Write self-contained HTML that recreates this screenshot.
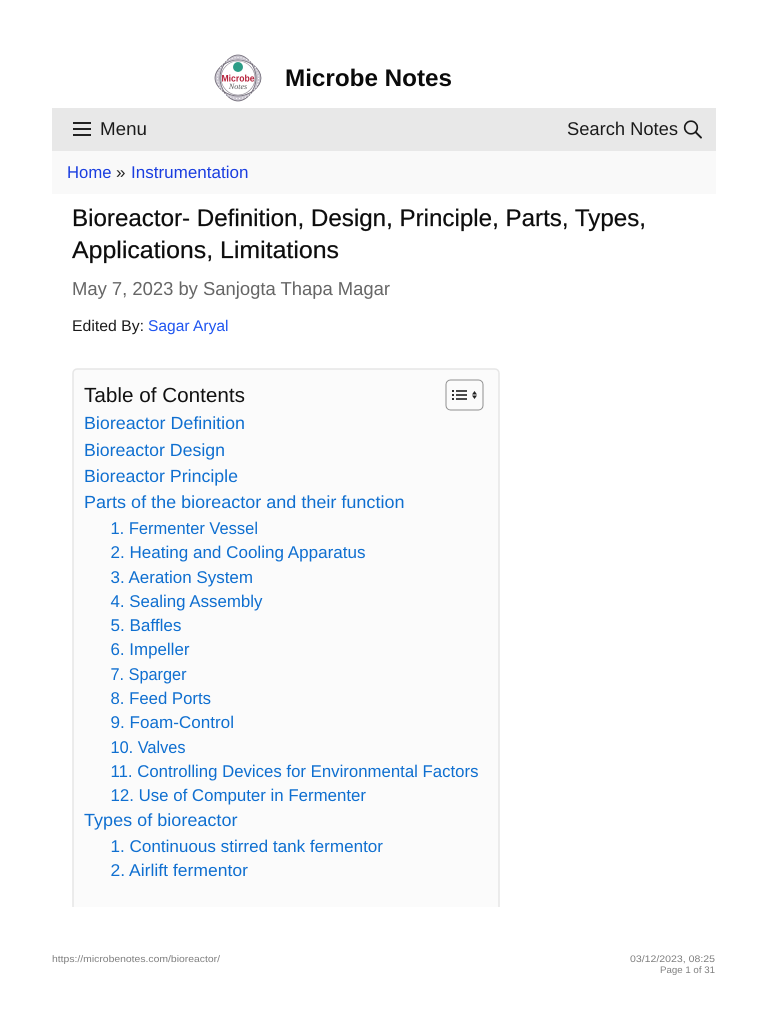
<!DOCTYPE html>
<html lang="en">
<head>
<meta charset="utf-8">
<title>Bioreactor - Microbe Notes</title>
<style>
html,body{margin:0;padding:0;background:#fff}
body{width:768px;height:1024px;overflow:hidden;position:relative}
svg{position:absolute;left:0;top:0;display:block}
text{font-family:"Liberation Sans",sans-serif;text-rendering:geometricPrecision}
.l{fill:#0f6fd0;font-size:17.6px}
.s{fill:#0f6fd0;font-size:17px}
.t{stroke:#0d0d0d;stroke-width:.22px}
</style>
</head>
<body>
<svg width="768" height="1024" viewBox="0 0 768 1024" xmlns="http://www.w3.org/2000/svg">
<!-- logo -->
<g transform="translate(238 78)">
<g fill="#c9c5cf" stroke="#6f6a76" stroke-width="0.8">
<path id="lens" d="M-15-13Q0-33 15-13Q0-23-15-13z"/>
<path d="M-15-13Q0-33 15-13Q0-23-15-13z" transform="rotate(90)"/>
<path d="M-15-13Q0-33 15-13Q0-23-15-13z" transform="rotate(180)"/>
<path d="M-15-13Q0-33 15-13Q0-23-15-13z" transform="rotate(270)"/>
</g>
<circle r="20.500" fill="none" stroke="#fff" stroke-width="1" stroke-dasharray="1 2"/>
<circle r="17" fill="#fff" stroke="#8b8692" stroke-width="0.6"/>
<circle cx="0" cy="-11" r="5" fill="#2c9c86"/>
<text x="0" y="3.500" text-anchor="middle" font-size="9.500" font-weight="700" fill="#b5203a" textLength="33" lengthAdjust="spacingAndGlyphs">Microbe</text>
<text x="0" y="11" text-anchor="middle" font-size="8" font-style="italic" fill="#555" style="font-family:'Liberation Serif',serif">Notes</text>
</g>
<text x="285" y="86" font-size="24" font-weight="700" fill="#0a0a0a" textLength="167" lengthAdjust="spacingAndGlyphs">Microbe Notes</text>

<!-- nav -->
<rect x="52" y="108" width="664" height="43" fill="#e8e8e8"/>
<path d="M73 123h18M73 129h18M73 135h18" stroke="#222" stroke-width="2" fill="none"/>
<text x="100" y="135" font-size="18.500" fill="#1a1a1a" textLength="47" lengthAdjust="spacingAndGlyphs">Menu</text>
<text x="567" y="135" font-size="18.500" fill="#1a1a1a" textLength="111" lengthAdjust="spacingAndGlyphs">Search Notes</text>
<circle cx="691" cy="127.500" r="6.300" fill="none" stroke="#1a1a1a" stroke-width="1.700"/>
<path d="M695.600 132.200L701 137.600" stroke="#1a1a1a" stroke-width="1.900" fill="none" stroke-linecap="round"/>

<!-- breadcrumb -->
<rect x="52" y="151" width="664" height="43" fill="#f9f9f9"/>
<text x="67" y="178" font-size="17" fill="#1a3ee0" textLength="44.500" lengthAdjust="spacingAndGlyphs">Home</text>
<text x="116" y="178" font-size="17" fill="#222">»</text>
<text x="131" y="178" font-size="17" fill="#1a3ee0" textLength="117.500" lengthAdjust="spacingAndGlyphs">Instrumentation</text>

<!-- title -->
<text class="t" x="72" y="226" font-size="24" fill="#0d0d0d" textLength="574" lengthAdjust="spacingAndGlyphs">Bioreactor- Definition, Design, Principle, Parts, Types,</text>
<text class="t" x="72" y="258" font-size="24" fill="#0d0d0d" textLength="267" lengthAdjust="spacingAndGlyphs">Applications, Limitations</text>
<text x="72" y="295" font-size="18.800" fill="#666" textLength="318" lengthAdjust="spacingAndGlyphs">May 7, 2023 by Sanjogta Thapa Magar</text>
<text x="72" y="331" font-size="15.500" fill="#1a1a1a" textLength="72" lengthAdjust="spacingAndGlyphs">Edited By:</text>
<text x="148" y="331" font-size="15.500" fill="#1f55f0" textLength="80.500" lengthAdjust="spacingAndGlyphs">Sagar Aryal</text>

<!-- TOC -->
<path d="M73 907V373a4 4 0 0 1 4-4H495a4 4 0 0 1 4 4V907" fill="#fbfbfb" stroke="#e6e6e6" stroke-width="1.500"/>
<text x="84" y="402" font-size="20.500" fill="#111" textLength="161" lengthAdjust="spacingAndGlyphs">Table of Contents</text>
<rect x="446" y="380" width="37" height="30" rx="4.500" fill="#fbfbfb" stroke="#8f8f8f" stroke-width="1"/>
<path d="M452 391h2M452 395h2M452 399h2" stroke="#111" stroke-width="1.800"/>
<path d="M456 391h11M456 395h11M456 399h11" stroke="#111" stroke-width="1.600"/>
<path d="M472 394.500l2.500-3.500 2.500 3.500zM472 395.500l2.500 3.500 2.500-3.500z" fill="#222"/>

<text class="l" x="84" y="429" textLength="161" lengthAdjust="spacingAndGlyphs">Bioreactor Definition</text>
<text class="l" x="84" y="456" textLength="141" lengthAdjust="spacingAndGlyphs">Bioreactor Design</text>
<text class="l" x="84" y="482" textLength="154" lengthAdjust="spacingAndGlyphs">Bioreactor Principle</text>
<text class="l" x="84" y="508" textLength="320.500" lengthAdjust="spacingAndGlyphs">Parts of the bioreactor and their function</text>
<text class="s" x="110.500" y="534" textLength="147.500" lengthAdjust="spacingAndGlyphs">1. Fermenter Vessel</text>
<text class="s" x="110.500" y="558" textLength="255" lengthAdjust="spacingAndGlyphs">2. Heating and Cooling Apparatus</text>
<text class="s" x="110.500" y="583" textLength="142.500" lengthAdjust="spacingAndGlyphs">3. Aeration System</text>
<text class="s" x="110.500" y="607" textLength="152" lengthAdjust="spacingAndGlyphs">4. Sealing Assembly</text>
<text class="s" x="110.500" y="631" textLength="71" lengthAdjust="spacingAndGlyphs">5. Baffles</text>
<text class="s" x="110.500" y="655" textLength="79" lengthAdjust="spacingAndGlyphs">6. Impeller</text>
<text class="s" x="110.500" y="680" textLength="76" lengthAdjust="spacingAndGlyphs">7. Sparger</text>
<text class="s" x="110.500" y="704" textLength="100.500" lengthAdjust="spacingAndGlyphs">8. Feed Ports</text>
<text class="s" x="110.500" y="728" textLength="123.500" lengthAdjust="spacingAndGlyphs">9. Foam-Control</text>
<text class="s" x="110.500" y="753" textLength="75" lengthAdjust="spacingAndGlyphs">10. Valves</text>
<text class="s" x="110.500" y="777" textLength="368" lengthAdjust="spacingAndGlyphs">11. Controlling Devices for Environmental Factors</text>
<text class="s" x="110.500" y="801" textLength="255.500" lengthAdjust="spacingAndGlyphs">12. Use of Computer in Fermenter</text>
<text class="l" x="84" y="826" textLength="153.500" lengthAdjust="spacingAndGlyphs">Types of bioreactor</text>
<text class="s" x="110.500" y="852" textLength="272.500" lengthAdjust="spacingAndGlyphs">1. Continuous stirred tank fermentor</text>
<text class="s" x="110.500" y="876" textLength="137.500" lengthAdjust="spacingAndGlyphs">2. Airlift fermentor</text>

<!-- footer -->
<text x="52" y="962" font-size="9.500" fill="#808080" textLength="168" lengthAdjust="spacingAndGlyphs">https://microbenotes.com/bioreactor/</text>
<text x="630" y="962" font-size="9.500" fill="#808080" textLength="85" lengthAdjust="spacingAndGlyphs">03/12/2023, 08:25</text>
<text x="660" y="973" font-size="9.500" fill="#808080" textLength="55" lengthAdjust="spacingAndGlyphs">Page 1 of 31</text>
</svg>
</body>
</html>
